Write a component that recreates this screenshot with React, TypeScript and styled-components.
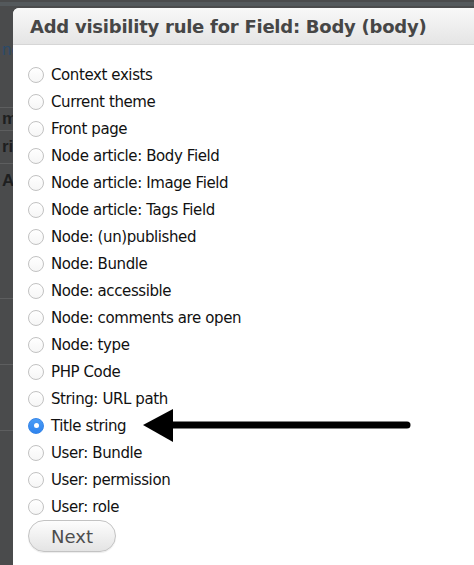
import React, {useState} from 'react'
import styled, {createGlobalStyle} from 'styled-components'

const GlobalStyle = createGlobalStyle`
  html, body {
    margin: 0;
    padding: 0;
    background: #4a4b4c;
  }
  #root {
    height: 565px;
  }
`;

const Screen = styled.div`
  position: relative;
  width: 474px;
  height: 565px;
  overflow: hidden;
  background: #4a4b4c;
  font-family: "DejaVu Sans", Verdana, sans-serif;
`;

// dimmed page that sits behind the modal
const BehindPage = styled.div`
  display: flex;
  flex-direction: column;
  padding-top: 36px;
`;

const TopStripe = styled.div`
  position: relative;
  height: 4px;
  margin-top: -34px;
  margin-bottom: 30px;
  background: #54595c;
`;

const BehindRow = styled.div<{ $h: number; $line?: boolean }>`
  height: ${p => p.$h}px;
  display: flex;
  align-items: center;
  border-bottom: ${p => (p.$line ? '1px solid #5d5e5f' : 'none')};
  color: #1e1f20;
  font-family: "Liberation Sans", Arial, sans-serif;
  font-size: 17px;
  font-weight: bold;
  padding-left: 2px;
`;

const BehindLink = styled.span`
  color: #2c4a68;
  font-weight: normal;
`;

const BehindFoot = styled.div`
  flex: 1;
  background: #3c3d3e;
  height: 130px;
`;

const Dialog = styled.div`
  position: absolute;
  left: 13px;
  top: 8px;
  width: 480px;
  height: 580px;
  background: #fff;
  border-radius: 6px 6px 0 0;
  overflow: hidden;
  display: flex;
  flex-direction: column;
`;

const TitleBar = styled.div`
  height: 37px;
  box-sizing: border-box;
  padding-left: 17px;
  display: flex;
  align-items: center;
  background: linear-gradient(#f8f8f8, #e5e5e5);
  border-bottom: 1px solid #d6d6d6;
`;

const Title = styled.h1`
  margin: 0;
  font-size: 18px;
  font-weight: bold;
  color: #464646;
  letter-spacing: -0.25px;
  white-space: nowrap;
`;

const Body = styled.form`
  padding: 16px 0 0 15px;
  display: flex;
  flex-direction: column;
`;

const Options = styled.div`
  display: flex;
  flex-direction: column;
`;

const OptionRow = styled.label`
  height: 27px;
  display: flex;
  align-items: center;
  gap: 7px;
  font-size: 15px;
  letter-spacing: -0.4px;
  color: #111;
  cursor: pointer;
`;

const Radio = styled.span<{ $checked: boolean }>`
  width: 16px;
  height: 16px;
  box-sizing: border-box;
  border-radius: 50%;
  flex: none;
  display: flex;
  align-items: center;
  justify-content: center;
  background: ${p => (p.$checked ? 'linear-gradient(#4a9cf6, #2f84ee)' : 'linear-gradient(#ffffff, #f6f6f6)')};
  border: 1px solid ${p => (p.$checked ? '#3585e8' : '#c2c2c2')};

  &::after {
    content: '';
    width: 5px;
    height: 5px;
    border-radius: 50%;
    background: #fff;
    display: ${p => (p.$checked ? 'block' : 'none')};
  }
`;

const Actions = styled.div`
  padding-top: 0;
`;

const NextButton = styled.button`
  width: 88px;
  height: 32px;
  border-radius: 16px;
  border: 1px solid #c3c3c3;
  background: linear-gradient(#fdfdfd, #e4e4e4);
  box-shadow: 0 1px 1px rgba(0, 0, 0, 0.08);
  font-family: inherit;
  font-size: 18px;
  color: #4e4e4e;
  padding: 0;
`;

// the black annotation arrow drawn over the dialog
const Pointer = styled.svg`
  position: absolute;
  left: 140px;
  top: 405px;
`;

const options = [
    'Context exists',
    'Current theme',
    'Front page',
    'Node article: Body Field',
    'Node article: Image Field',
    'Node article: Tags Field',
    'Node: (un)published',
    'Node: Bundle',
    'Node: accessible',
    'Node: comments are open',
    'Node: type',
    'PHP Code',
    'String: URL path',
    'Title string',
    'User: Bundle',
    'User: permission',
    'User: role',
]

export default function App() {
    const [selected, setSelected] = useState('Title string')

    return (
        <Screen>
            <GlobalStyle/>
            <BehindPage>
                <TopStripe/>
                <BehindRow $h={28}><BehindLink>ne</BehindLink></BehindRow>
                <BehindRow $h={43} $line/>
                <BehindRow $h={22} $line>m</BehindRow>
                <BehindRow $h={32} $line>ri</BehindRow>
                <BehindRow $h={34}>Ar</BehindRow>
                <BehindRow $h={100} $line/>
                <BehindRow $h={65} $line/>
                <BehindRow $h={65} $line/>
                <BehindFoot/>
            </BehindPage>

            <Dialog>
                <TitleBar>
                    <Title>Add visibility rule for Field: Body (body)</Title>
                </TitleBar>
                <Body onSubmit={e => e.preventDefault()}>
                    <Options>
                        {options.map(o => (
                            <OptionRow key={o} onClick={() => setSelected(o)}>
                                <Radio $checked={selected === o}/>
                                {o}
                            </OptionRow>
                        ))}
                    </Options>
                    <Actions>
                        <NextButton type="submit">Next</NextButton>
                    </Actions>
                </Body>
            </Dialog>

            <Pointer width="276" height="40" viewBox="0 0 276 40">
                <polygon points="3,20 33,4 33,37" fill="#000"/>
                <line x1="30" y1="20" x2="267" y2="20" stroke="#000" strokeWidth="7" strokeLinecap="round"/>
            </Pointer>
        </Screen>
    )
}
